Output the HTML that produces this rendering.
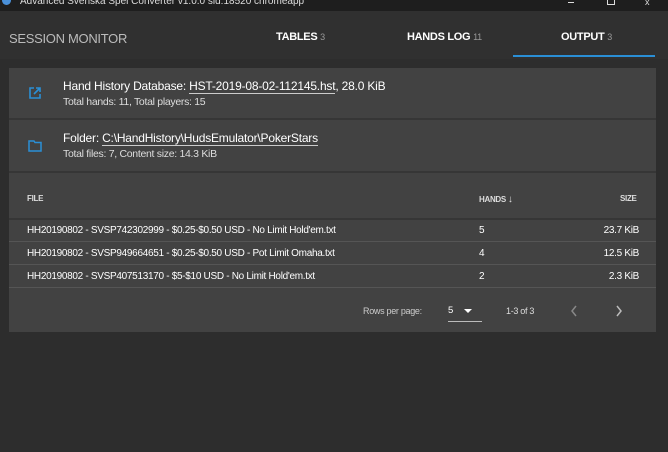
<!DOCTYPE html>
<html><head><style>
*{margin:0;padding:0;box-sizing:border-box}
body{width:668px;height:452px;background:#2d2d2d;font-family:"Liberation Sans",sans-serif;color:#fff;overflow:hidden;position:relative}
.tb{position:absolute;left:0;top:0;width:668px;height:11px;background:#1e1e1e;font-size:10px;color:#ddd;line-height:4px;padding-left:20px;overflow:hidden}
.hd{position:absolute;left:0;top:11px;width:668px;height:48px;background:#303030}
.t{position:absolute;font-size:11px;font-weight:bold;letter-spacing:-0.3px}
.t span{color:#999;font-weight:normal;font-size:9px}
.card{position:absolute;left:9px;top:68px;width:647px;height:264px;background:#424242}
.a{font-size:12px;color:#fff;letter-spacing:-0.2px}
.a u{text-decoration:none;border-bottom:1px solid #ccc}
.s{font-size:10.5px;color:#ddd;letter-spacing:-0.3px}
.line{position:absolute;left:0;width:647px;height:2px;background:#363636}
.f{position:absolute;font-size:10px;letter-spacing:-0.3px}
</style></head><body>
<div class="tb">Advanced Svenska Spel Converter v1.0.0 sid:18520 chromeapp</div>
<div style="position:absolute;left:2px;top:0;width:9px;height:5px;border-radius:0 0 5px 5px;background:#4a90d9"></div>
<div style="position:absolute;left:568px;top:2px;width:6px;height:1px;background:#ddd"></div>
<div style="position:absolute;left:607px;top:0;width:8px;height:5px;border:1px solid #ddd;border-top:none"></div>
<div style="position:absolute;left:645px;top:0;font-size:9px;line-height:5px;color:#ddd">x</div>
<div class="hd">
<div style="position:absolute;left:9px;top:20px;font-size:13px;color:#bbb;letter-spacing:-0.3px">SESSION MONITOR</div>
<div class="t" style="left:276px;top:20px">TABLES <span>3</span></div>
<div class="t" style="left:407px;top:20px">HANDS LOG <span>11</span></div>
<div class="t" style="left:561px;top:20px">OUTPUT <span>3</span></div>
<div style="position:absolute;left:513px;top:44px;width:142px;height:2px;background:#2a8fd6"></div>
</div>
<div class="card">
<svg style="position:absolute;left:19px;top:18px" width="14" height="14" viewBox="0 0 14 14"><path d="M6 2H2v10h10V8M8 2h4v4M12 2L6 8" stroke="#2a8fd6" stroke-width="1.6" fill="none"/></svg>
<div class="a" style="position:absolute;left:54px;top:11px">Hand History Database: <u>HST-2019-08-02-112145.hst</u>, 28.0 KiB</div>
<div class="s" style="position:absolute;left:54px;top:28px">Total hands: 11, Total players: 15</div>
<div class="line" style="top:50px"></div>
<svg style="position:absolute;left:19px;top:72px" width="14" height="12" viewBox="0 0 14 12"><path d="M1 1h5l1 1.5h6V11H1z" stroke="#2a8fd6" stroke-width="1.5" fill="none"/></svg>
<div class="a" style="position:absolute;left:54px;top:63px">Folder: <u>C:\HandHistory\HudsEmulator\PokerStars</u></div>
<div class="s" style="position:absolute;left:54px;top:80px">Total files: 7, Content size: 14.3 KiB</div>
<div class="line" style="top:103px"></div>
<div class="f" style="left:18px;top:126px;font-size:8px;font-weight:bold;color:#ddd">FILE</div>
<div class="f" style="left:470px;top:126px;font-size:8px;font-weight:bold;color:#ddd">HANDS <b style="font-size:10px">↓</b></div>
<div class="f" style="left:611px;top:126px;font-size:8px;font-weight:bold;color:#ddd">SIZE</div>
<div class="line" style="top:150px"></div>
<div class="f" style="left:18px;top:157px">HH20190802 - SVSP742302999 - $0.25-$0.50 USD - No Limit Hold'em.txt</div>
<div class="f" style="left:470px;top:157px">5</div>
<div class="f" style="right:17px;top:157px">23.7 KiB</div>
<div class="line" style="top:173px;height:1px;background:#555"></div>
<div class="f" style="left:18px;top:180px">HH20190802 - SVSP949664651 - $0.25-$0.50 USD - Pot Limit Omaha.txt</div>
<div class="f" style="left:470px;top:180px">4</div>
<div class="f" style="right:17px;top:180px">12.5 KiB</div>
<div class="line" style="top:196px;height:1px;background:#555"></div>
<div class="f" style="left:18px;top:203px">HH20190802 - SVSP407513170 - $5-$10 USD - No Limit Hold'em.txt</div>
<div class="f" style="left:470px;top:203px">2</div>
<div class="f" style="right:17px;top:203px">2.3 KiB</div>
<div class="line" style="top:219px;height:1px;background:#555"></div>
<div class="f" style="left:354px;top:238px;font-size:9px;color:#ccc">Rows per page:</div>
<div class="f" style="left:439px;top:237px;font-size:9.5px">5</div>
<div style="position:absolute;left:455px;top:241px;border-left:4px solid transparent;border-right:4px solid transparent;border-top:4px solid #fff"></div>
<div style="position:absolute;left:439px;top:253px;width:34px;height:1px;background:#bbb"></div>
<div class="f" style="left:497px;top:238px;font-size:9px;color:#ddd">1-3 of 3</div>
<svg style="position:absolute;left:561px;top:237px" width="8" height="12" viewBox="0 0 8 12"><path d="M6 1L2 6l4 5" stroke="#888" stroke-width="1.5" fill="none"/></svg>
<svg style="position:absolute;left:606px;top:237px" width="8" height="12" viewBox="0 0 8 12"><path d="M2 1l4 5-4 5" stroke="#bbb" stroke-width="1.5" fill="none"/></svg>
</div>
</body></html>
